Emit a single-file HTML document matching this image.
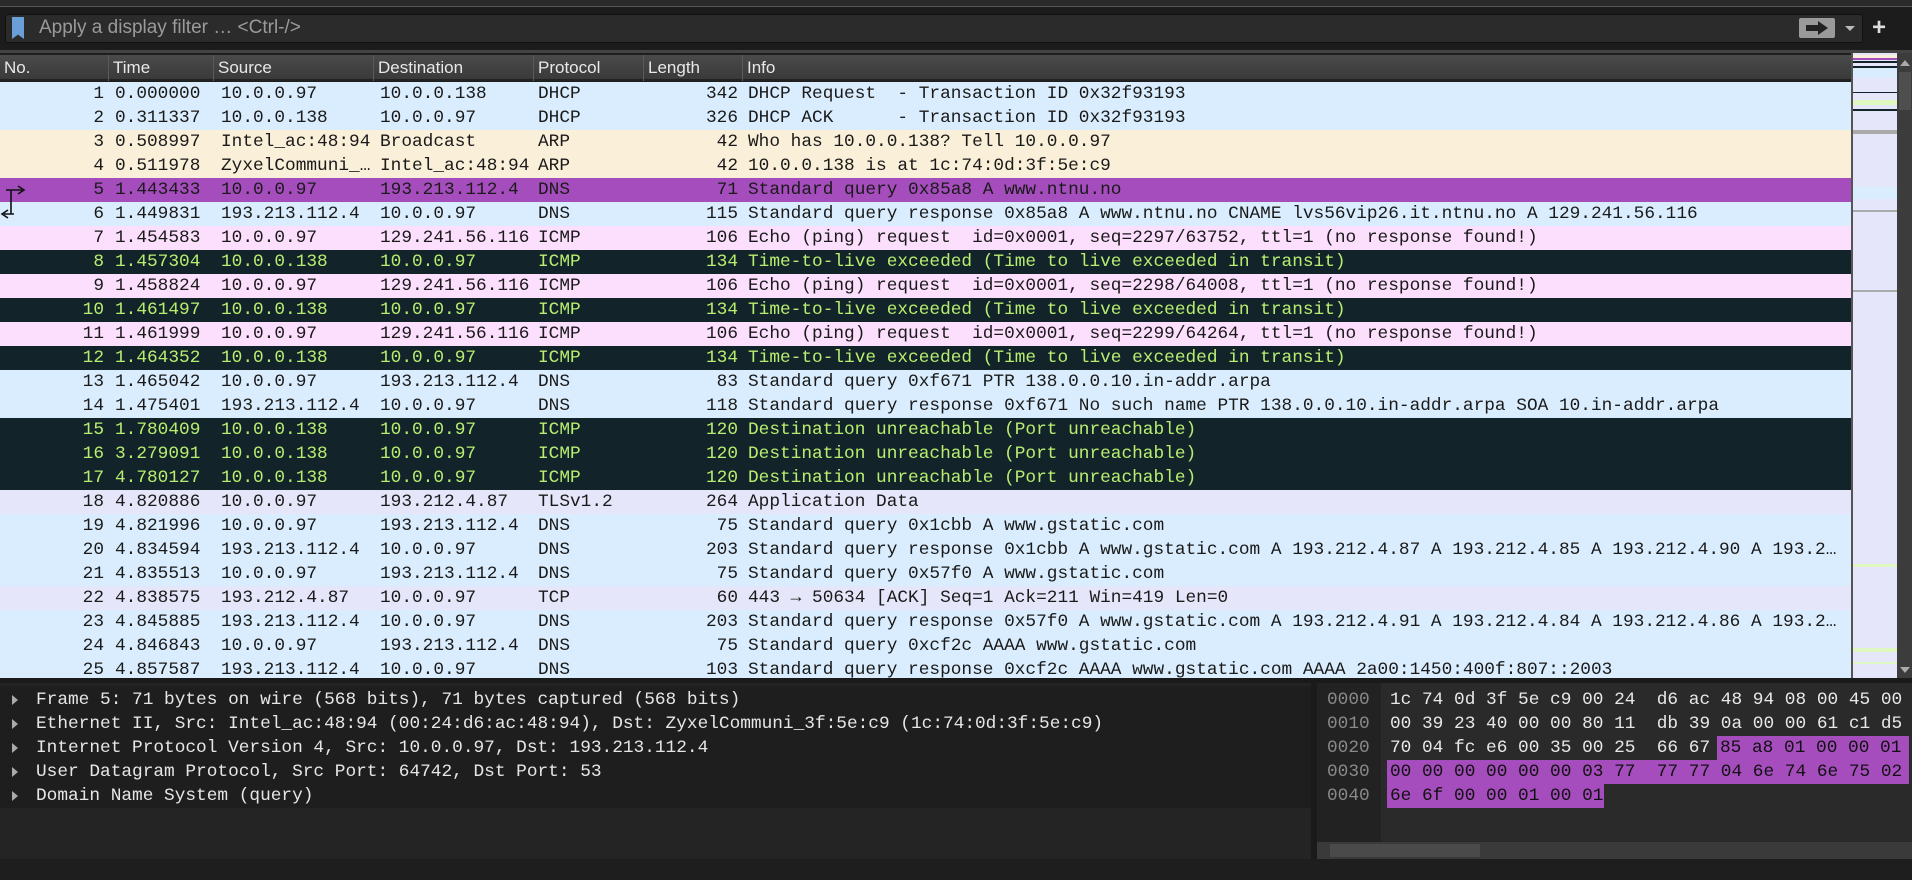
<!DOCTYPE html>
<html><head><meta charset="utf-8"><style>
*{margin:0;padding:0;box-sizing:border-box}
body{width:1912px;height:859px;background:#1e1e1e;position:relative;overflow:hidden;font-family:"Liberation Sans",sans-serif}
.abs{position:absolute}
.mono{font-family:"Liberation Mono",monospace;font-size:17.8px;white-space:pre}
.row{position:absolute;left:0;width:1851px;height:24px;line-height:24px;color:#1a1a1a;overflow:hidden}
.row span{position:absolute;top:0}
.c0{right:1747px;text-align:right}
.c1{left:115px}.c2{left:221px}.c3{left:380px}.c4{left:538px}
.c5{right:1113px;text-align:right}.c6{left:748px}
.b{background:#daedfe}.t{background:#faefd8}.s{background:#a64dbe}.p{background:#fbdffd}
.d{background:#12232a;color:#b8ee70 !important}.l{background:#e6e6fb}
.hdr{position:absolute;top:55px;left:0;width:1851px;height:26px;background:linear-gradient(#4a4a4a,#3a3a3a);color:#e8e8e8;font-size:17px;line-height:26px;border-bottom:2px solid #222}
.hdr span{position:absolute;top:0}
.sep{position:absolute;top:0;width:1px;height:26px;background:#5a5a5a}
.tree{position:absolute;left:0;width:1311px;height:24px;line-height:24px;color:#e6e6e6}
.tree i{position:absolute;left:12px;top:7px;width:0;height:0;border-left:6px solid #aaa;border-top:5px solid transparent;border-bottom:5px solid transparent}
.tree span{position:absolute;left:36px}
.hex{position:absolute;height:24px;line-height:24px;color:#e8e8e8}
.off{position:absolute;left:1327px;height:24px;line-height:24px;color:#8a8a8a}
</style></head><body>
<div class="abs" style="left:0;top:0;width:1912px;height:7px;background:#2a2a2a;border-bottom:1px solid #555"></div>
<div class="abs" style="left:0;top:8px;width:1912px;height:44px;background:#1c1c1c"></div>
<div class="abs" style="left:5px;top:14px;width:1858px;height:29px;background:#2b2b2b;border:1px solid #111;border-radius:3px"></div>
<div class="abs" style="left:12px;top:17px;width:12px;height:22px;background:#6b9fd8;clip-path:polygon(0 0,100% 0,100% 100%,50% 80%,0 100%)"></div>
<div class="abs" style="left:39px;top:15px;height:26px;line-height:26px;color:#9a9a9a;font-size:19px">Apply a display filter … &lt;Ctrl-/&gt;</div>
<div class="abs" style="left:1799px;top:18px;width:36px;height:20px;background:#9a9a9a;border-radius:2px"></div>
<div class="abs" style="left:1806px;top:25px;width:14px;height:6px;background:#222"></div>
<div class="abs" style="left:1818px;top:21px;width:0;height:0;border-left:10px solid #222;border-top:7px solid transparent;border-bottom:7px solid transparent"></div>
<div class="abs" style="left:1845px;top:26px;border-top:5px solid #bbb;border-left:5px solid transparent;border-right:5px solid transparent"></div>
<div class="abs" style="left:1872px;top:14px;color:#ddd;font-size:24px;font-weight:bold">+</div>
<div class="abs" style="left:0;top:50px;width:1912px;height:3px;background:#444"></div>

<div class="hdr">
<span style="left:4px">No.</span><div class="sep" style="left:108px"></div>
<span style="left:113px">Time</span><div class="sep" style="left:213px"></div>
<span style="left:218px">Source</span><div class="sep" style="left:373px"></div>
<span style="left:378px">Destination</span><div class="sep" style="left:533px"></div>
<span style="left:538px">Protocol</span><div class="sep" style="left:643px"></div>
<span style="left:648px">Length</span><div class="sep" style="left:742px"></div>
<span style="left:747px">Info</span>
</div>

<div class="mono">
<div class="row b" style="top:82px"><span class="c0">1</span><span class="c1">0.000000</span><span class="c2">10.0.0.97</span><span class="c3">10.0.0.138</span><span class="c4">DHCP</span><span class="c5">342</span><span class="c6">DHCP Request  - Transaction ID 0x32f93193</span></div>
<div class="row b" style="top:106px"><span class="c0">2</span><span class="c1">0.311337</span><span class="c2">10.0.0.138</span><span class="c3">10.0.0.97</span><span class="c4">DHCP</span><span class="c5">326</span><span class="c6">DHCP ACK      - Transaction ID 0x32f93193</span></div>
<div class="row t" style="top:130px"><span class="c0">3</span><span class="c1">0.508997</span><span class="c2">Intel_ac:48:94</span><span class="c3">Broadcast</span><span class="c4">ARP</span><span class="c5">42</span><span class="c6">Who has 10.0.0.138? Tell 10.0.0.97</span></div>
<div class="row t" style="top:154px"><span class="c0">4</span><span class="c1">0.511978</span><span class="c2">ZyxelCommuni_…</span><span class="c3">Intel_ac:48:94</span><span class="c4">ARP</span><span class="c5">42</span><span class="c6">10.0.0.138 is at 1c:74:0d:3f:5e:c9</span></div>
<div class="row s" style="top:178px"><span class="c0">5</span><span class="c1">1.443433</span><span class="c2">10.0.0.97</span><span class="c3">193.213.112.4</span><span class="c4">DNS</span><span class="c5">71</span><span class="c6">Standard query 0x85a8 A www.ntnu.no</span></div>
<div class="row b" style="top:202px"><span class="c0">6</span><span class="c1">1.449831</span><span class="c2">193.213.112.4</span><span class="c3">10.0.0.97</span><span class="c4">DNS</span><span class="c5">115</span><span class="c6">Standard query response 0x85a8 A www.ntnu.no CNAME lvs56vip26.it.ntnu.no A 129.241.56.116</span></div>
<div class="row p" style="top:226px"><span class="c0">7</span><span class="c1">1.454583</span><span class="c2">10.0.0.97</span><span class="c3">129.241.56.116</span><span class="c4">ICMP</span><span class="c5">106</span><span class="c6">Echo (ping) request  id=0x0001, seq=2297/63752, ttl=1 (no response found!)</span></div>
<div class="row d" style="top:250px"><span class="c0">8</span><span class="c1">1.457304</span><span class="c2">10.0.0.138</span><span class="c3">10.0.0.97</span><span class="c4">ICMP</span><span class="c5">134</span><span class="c6">Time-to-live exceeded (Time to live exceeded in transit)</span></div>
<div class="row p" style="top:274px"><span class="c0">9</span><span class="c1">1.458824</span><span class="c2">10.0.0.97</span><span class="c3">129.241.56.116</span><span class="c4">ICMP</span><span class="c5">106</span><span class="c6">Echo (ping) request  id=0x0001, seq=2298/64008, ttl=1 (no response found!)</span></div>
<div class="row d" style="top:298px"><span class="c0">10</span><span class="c1">1.461497</span><span class="c2">10.0.0.138</span><span class="c3">10.0.0.97</span><span class="c4">ICMP</span><span class="c5">134</span><span class="c6">Time-to-live exceeded (Time to live exceeded in transit)</span></div>
<div class="row p" style="top:322px"><span class="c0">11</span><span class="c1">1.461999</span><span class="c2">10.0.0.97</span><span class="c3">129.241.56.116</span><span class="c4">ICMP</span><span class="c5">106</span><span class="c6">Echo (ping) request  id=0x0001, seq=2299/64264, ttl=1 (no response found!)</span></div>
<div class="row d" style="top:346px"><span class="c0">12</span><span class="c1">1.464352</span><span class="c2">10.0.0.138</span><span class="c3">10.0.0.97</span><span class="c4">ICMP</span><span class="c5">134</span><span class="c6">Time-to-live exceeded (Time to live exceeded in transit)</span></div>
<div class="row b" style="top:370px"><span class="c0">13</span><span class="c1">1.465042</span><span class="c2">10.0.0.97</span><span class="c3">193.213.112.4</span><span class="c4">DNS</span><span class="c5">83</span><span class="c6">Standard query 0xf671 PTR 138.0.0.10.in-addr.arpa</span></div>
<div class="row b" style="top:394px"><span class="c0">14</span><span class="c1">1.475401</span><span class="c2">193.213.112.4</span><span class="c3">10.0.0.97</span><span class="c4">DNS</span><span class="c5">118</span><span class="c6">Standard query response 0xf671 No such name PTR 138.0.0.10.in-addr.arpa SOA 10.in-addr.arpa</span></div>
<div class="row d" style="top:418px"><span class="c0">15</span><span class="c1">1.780409</span><span class="c2">10.0.0.138</span><span class="c3">10.0.0.97</span><span class="c4">ICMP</span><span class="c5">120</span><span class="c6">Destination unreachable (Port unreachable)</span></div>
<div class="row d" style="top:442px"><span class="c0">16</span><span class="c1">3.279091</span><span class="c2">10.0.0.138</span><span class="c3">10.0.0.97</span><span class="c4">ICMP</span><span class="c5">120</span><span class="c6">Destination unreachable (Port unreachable)</span></div>
<div class="row d" style="top:466px"><span class="c0">17</span><span class="c1">4.780127</span><span class="c2">10.0.0.138</span><span class="c3">10.0.0.97</span><span class="c4">ICMP</span><span class="c5">120</span><span class="c6">Destination unreachable (Port unreachable)</span></div>
<div class="row l" style="top:490px"><span class="c0">18</span><span class="c1">4.820886</span><span class="c2">10.0.0.97</span><span class="c3">193.212.4.87</span><span class="c4">TLSv1.2</span><span class="c5">264</span><span class="c6">Application Data</span></div>
<div class="row b" style="top:514px"><span class="c0">19</span><span class="c1">4.821996</span><span class="c2">10.0.0.97</span><span class="c3">193.213.112.4</span><span class="c4">DNS</span><span class="c5">75</span><span class="c6">Standard query 0x1cbb A www.gstatic.com</span></div>
<div class="row b" style="top:538px"><span class="c0">20</span><span class="c1">4.834594</span><span class="c2">193.213.112.4</span><span class="c3">10.0.0.97</span><span class="c4">DNS</span><span class="c5">203</span><span class="c6">Standard query response 0x1cbb A www.gstatic.com A 193.212.4.87 A 193.212.4.85 A 193.212.4.90 A 193.2…</span></div>
<div class="row b" style="top:562px"><span class="c0">21</span><span class="c1">4.835513</span><span class="c2">10.0.0.97</span><span class="c3">193.213.112.4</span><span class="c4">DNS</span><span class="c5">75</span><span class="c6">Standard query 0x57f0 A www.gstatic.com</span></div>
<div class="row l" style="top:586px"><span class="c0">22</span><span class="c1">4.838575</span><span class="c2">193.212.4.87</span><span class="c3">10.0.0.97</span><span class="c4">TCP</span><span class="c5">60</span><span class="c6">443 → 50634 [ACK] Seq=1 Ack=211 Win=419 Len=0</span></div>
<div class="row b" style="top:610px"><span class="c0">23</span><span class="c1">4.845885</span><span class="c2">193.213.112.4</span><span class="c3">10.0.0.97</span><span class="c4">DNS</span><span class="c5">203</span><span class="c6">Standard query response 0x57f0 A www.gstatic.com A 193.212.4.91 A 193.212.4.84 A 193.212.4.86 A 193.2…</span></div>
<div class="row b" style="top:634px"><span class="c0">24</span><span class="c1">4.846843</span><span class="c2">10.0.0.97</span><span class="c3">193.213.112.4</span><span class="c4">DNS</span><span class="c5">75</span><span class="c6">Standard query 0xcf2c AAAA www.gstatic.com</span></div>
<div class="row b" style="top:658px;height:20px;overflow:hidden"><span class="c0">25</span><span class="c1">4.857587</span><span class="c2">193.213.112.4</span><span class="c3">10.0.0.97</span><span class="c4">DNS</span><span class="c5">103</span><span class="c6">Standard query response 0xcf2c AAAA www.gstatic.com AAAA 2a00:1450:400f:807::2003</span></div>
</div>
<svg class="abs" style="left:0;top:178px" width="30" height="48"><path d="M11 12 V36 M6 12 H22 M18 8 L24 12 L18 16 M4 36 H14 M8 32 L2 36 L8 40" stroke="#111" stroke-width="1.6" fill="none"/></svg>
<div class="abs" style="left:1851px;top:53px;width:2px;height:625px;background:#555"></div>
<div class="abs" style="left:1853px;top:53px;width:44px;height:625px;background:#e6e6fb"></div>
<div class="abs" style="left:1853px;top:55px;width:44px;height:4px;background:#faefd8"></div>
<div class="abs" style="left:1853px;top:58px;width:44px;height:2px;background:#a64dbe"></div>
<div class="abs" style="left:1853px;top:61px;width:44px;height:2px;background:#12232a"></div>
<div class="abs" style="left:1853px;top:66px;width:44px;height:2px;background:#12232a"></div>
<div class="abs" style="left:1853px;top:68px;width:44px;height:10px;background:#daedfe"></div>
<div class="abs" style="left:1853px;top:92px;width:44px;height:1px;background:#12232a"></div>
<div class="abs" style="left:1853px;top:100px;width:44px;height:5px;background:#dff7c0"></div>
<div class="abs" style="left:1853px;top:109px;width:44px;height:2px;background:#12232a"></div>
<div class="abs" style="left:1853px;top:130px;width:44px;height:4px;background:#aaa"></div>
<div class="abs" style="left:1853px;top:187px;width:44px;height:12px;background:#daedfe"></div>
<div class="abs" style="left:1853px;top:210px;width:44px;height:2px;background:#aaa"></div>
<div class="abs" style="left:1853px;top:290px;width:44px;height:2px;background:#aaa"></div>
<div class="abs" style="left:1853px;top:564px;width:44px;height:3px;background:#dff7c0"></div>
<div class="abs" style="left:1853px;top:648px;width:44px;height:4px;background:#dff7c0"></div>
<div class="abs" style="left:1853px;top:662px;width:44px;height:2px;background:#dff7c0"></div>
<div class="abs" style="left:1897px;top:53px;width:15px;height:625px;background:#3c3c3c"></div>
<div class="abs" style="left:1899px;top:72px;width:12px;height:38px;background:#4e4e4e"></div>
<div class="abs" style="left:1900px;top:60px;border-bottom:6px solid #aaa;border-left:5px solid transparent;border-right:5px solid transparent"></div>
<div class="abs" style="left:1900px;top:667px;border-top:6px solid #aaa;border-left:5px solid transparent;border-right:5px solid transparent"></div>
<div class="abs" style="left:0;top:678px;width:1912px;height:5px;background:#1a1a1a"></div>
<div class="abs" style="left:0;top:683px;width:1311px;height:176px;background:#242424"></div>
<div class="abs" style="left:0;top:686px;width:1311px;height:122px;background:#1e1e1e"></div>
<div class="mono">
<div class="tree" style="top:688px"><i></i><span>Frame 5: 71 bytes on wire (568 bits), 71 bytes captured (568 bits)</span></div>
<div class="tree" style="top:712px"><i></i><span>Ethernet II, Src: Intel_ac:48:94 (00:24:d6:ac:48:94), Dst: ZyxelCommuni_3f:5e:c9 (1c:74:0d:3f:5e:c9)</span></div>
<div class="tree" style="top:736px"><i></i><span>Internet Protocol Version 4, Src: 10.0.0.97, Dst: 193.213.112.4</span></div>
<div class="tree" style="top:760px"><i></i><span>User Datagram Protocol, Src Port: 64742, Dst Port: 53</span></div>
<div class="tree" style="top:784px"><i></i><span>Domain Name System (query)</span></div>
</div>
<div class="abs" style="left:1311px;top:683px;width:6px;height:176px;background:#1a1a1a"></div>
<div class="abs" style="left:1317px;top:683px;width:595px;height:176px;background:#2a2a2a"></div>
<div class="abs" style="left:1317px;top:683px;width:64px;height:160px;background:#222"></div>
<div class="abs" style="left:1317px;top:842px;width:595px;height:17px;background:#3a3a3a"></div>
<div class="abs" style="left:1330px;top:844px;width:150px;height:13px;background:#4a4a4a"></div>
<div class="mono">
<div class="off" style="top:688px">0000</div>
<div class="off" style="top:712px">0010</div>
<div class="off" style="top:736px">0020</div>
<div class="off" style="top:760px">0030</div>
<div class="off" style="top:784px">0040</div>
<div class="hex" style="left:1390px;top:688px">1c 74 0d 3f 5e c9 00 24  d6 ac 48 94 08 00 45 00</div>
<div class="hex" style="left:1390px;top:712px">00 39 23 40 00 00 80 11  db 39 0a 00 00 61 c1 d5</div>
<div class="hex" style="left:1390px;top:736px">70 04 fc e6 00 35 00 25  66 67 </div>
<div class="hex" style="left:1717px;top:736px;background:#a64dbe;color:#111;padding-left:3px;width:192px">85 a8 01 00 00 01</div>
<div class="hex" style="left:1387px;top:760px;background:#a64dbe;color:#111;padding-left:3px;width:522px">00 00 00 00 00 00 03 77  77 77 04 6e 74 6e 75 02</div>
<div class="hex" style="left:1387px;top:784px;background:#a64dbe;color:#111;padding-left:3px;width:217px">6e 6f 00 00 01 00 01</div>
</div>
</body></html>
